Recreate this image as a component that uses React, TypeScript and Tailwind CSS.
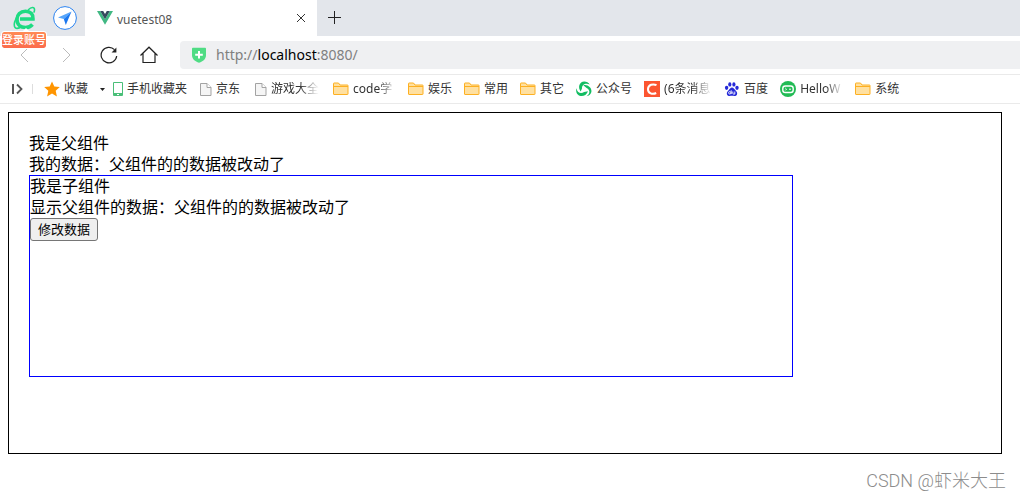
import { useState } from 'react';
import type { ReactNode } from 'react';
import { clsx } from 'clsx';

interface Bookmark {
  label: string;
  icon: ReactNode;
  className?: string;
  // Long titles fade out on the right
  faded?: string;
}

const FolderIcon = () => (
  <svg width="16" height="16" viewBox="0 0 16 16" fill="#ffe0a0" stroke="#fdb022" aria-hidden="true">
    <path d="M.5 13V2.500q0-.5.5-.5h4.500l1.500 2h7.500q.5 0 .5.500V13q0 .5-.5.500H1q-.5 0-.5-.5z" />
    <path d="M.5 5.500h14.500" />
  </svg>
);

const PageIcon = () => (
  <svg width="12" height="14" viewBox="0 0 12 14" fill="#f5f5f5" stroke="#a3a3a3" aria-hidden="true">
    <path d="M.5 1.500h6.500l4 4v8H.5z" />
    <path d="M7 1.500v4h4" fill="#fff" />
  </svg>
);

const PhoneIcon = () => (
  <svg width="10" height="16" viewBox="0 0 10 16" aria-hidden="true">
    <rect width="10" height="14" y="1" rx="1" fill="#4abf78" />
    <rect x="1" y="2" width="8" height="10" fill="#fff" />
    <rect x="4" y="13" width="2" height="1" fill="#fff" />
  </svg>
);

const StarIcon = () => (
  <svg width="16" height="16" viewBox="0 0 16 16" fill="#ff9500" aria-hidden="true">
    <path d="M8 .5l2.300 5 5.500.6-4.100 3.700 1.200 5.600L8 12.600l-4.900 2.800 1.200-5.600L.2 6.100l5.500-.6z" />
  </svg>
);

const SwirlIcon = () => (
  <svg width="16" height="16" viewBox="0 0 16 16" fill="#12bd62" aria-hidden="true">
    <path d="M4.700 10.500C1.500 6.500 3.300.8 8.300.6c2.300 0 4.300 1.200 5.500 3C10.200 1.500 5.700 3.200 6 7.500z" />
    <path d="M7.300 4.300c5-1.300 9 3.300 8 7-.7 2.300-2.500 3.700-4.800 3.900 3.600-2.100 4-6.400.1-8.300z" />
    <path d="M12 10.200c-1.700 5-7.300 6.300-10.200 3.300C.2 11.800-.3 9.400.6 7.200c.2 4.200 4 6.300 7.500 3.900z" />
  </svg>
);

const CsdnIcon = () => (
  <svg width="16" height="16" viewBox="0 0 16 16" aria-hidden="true">
    <rect width="16" height="16" fill="#fc5531" />
    <path d="M12.500 4.200C9.200 2.500 4.300 3.500 4 8c-.2 4.500 4.500 5.800 8.200 4" fill="none" stroke="#fff" strokeWidth="2" />
  </svg>
);

const PawIcon = () => (
  <svg width="16" height="16" viewBox="0 0 16 16" fill="#2529d8" aria-hidden="true">
    <ellipse cx="2.600" cy="6.800" rx="1.700" ry="2.100" />
    <ellipse cx="5.800" cy="3.400" rx="1.600" ry="2.200" />
    <ellipse cx="9.900" cy="3.400" rx="1.600" ry="2.200" />
    <ellipse cx="13" cy="6.800" rx="1.700" ry="2.100" />
    <path d="M8 6.500c1.500 0 2.300 1.600 3.400 2.700 1.300 1.200 2.200 2.500 1.600 4.200-.8 2.200-3.200 1.400-5 1.400s-4.200.8-5-1.400c-.6-1.700.3-3 1.600-4.200C5.700 8.100 6.500 6.500 8 6.500z" />
    <g fill="none" stroke="#fff" strokeWidth=".9">
      <circle cx="5.800" cy="11.800" r="1.200" />
      <path d="M7.200 9.300V13M8.800 10.500v1.800q0 .8.800.8h1.200v-2.600" />
    </g>
  </svg>
);

const RobotIcon = () => (
  <svg width="16" height="16" viewBox="0 0 16 16" aria-hidden="true">
    <circle cx="8" cy="8" r="8" fill="#22bb55" />
    <rect x="2.800" y="5" width="10.400" height="6.500" rx="2.500" fill="none" stroke="#fff" strokeWidth="1.400" />
    <path d="M5.300 7l1.200 1.200-1.200 1.200M9 8.200h2" fill="none" stroke="#fff" />
  </svg>
);

const BrowserLogo = () => (
  <svg width="24" height="24" viewBox="0 0 24 24" fill="none" stroke="#1edb82" aria-hidden="true">
    <path d="M7 13h13c.3-4.800-2.500-7.700-7.500-7.700-5.100 0-8.500 3.300-8.500 8.200 0 5 3.500 8 8.500 8 3 0 5.300-1 7-3" strokeWidth="3.600" />
    <path d="M15 4c3.500-3.200 6.300-3.300 6.500-.5.100 1-.2 2.200-.8 3.200M6 8C1.500 13 .2 19.500 2.200 21.700c1.300 1.200 4 .6 6.800-1.200" strokeWidth="1.600" />
  </svg>
);

const PlaneIcon = () => (
  <svg width="24" height="24" viewBox="0 0 24 24" aria-hidden="true">
    <circle cx="12" cy="12" r="11.400" fill="#fff" stroke="#2b83f0" />
    <path d="M18.500 5.500L5 11.500l5.800 1.600z" fill="#56a5fb" />
    <path d="M18.500 5.500l-7.700 7.600 2 5.900z" fill="#1b78f0" />
  </svg>
);

const VueIcon = () => (
  <svg width="16" height="14" viewBox="0 0 16 14" aria-hidden="true">
    <path d="M0 0h3.200L8 8.300 12.800 0H16L8 13.800z" fill="#41b883" />
    <path d="M3.200 0h3L8 3.100 9.800 0h3L8 8.300z" fill="#35495e" />
  </svg>
);

const ShieldIcon = () => (
  <svg width="14" height="16" viewBox="0 0 14 16" aria-hidden="true">
    <path d="M0 1.500q0-.8.800-.8h12.400q.8 0 .8.800V8c0 4-3 6.500-7 7.700C3 14.500 0 12 0 8z" fill="#4fdc84" />
    <path d="M7 4v7.500M3.200 7.700h7.600" stroke="#fff" strokeWidth="2" />
  </svg>
);

const bookmarks: Bookmark[] = [
  { label: '手机收藏夹', icon: <PhoneIcon /> },
  { label: '京东', icon: <PageIcon />, className: 'px-px' },
  { label: '游戏大全', icon: <PageIcon />, className: 'px-0.5', faded: 'w-12' },
  { label: 'code学', icon: <FolderIcon />, faded: 'w-[43px]' },
  { label: '娱乐', icon: <FolderIcon /> },
  { label: '常用', icon: <FolderIcon /> },
  { label: '其它', icon: <FolderIcon /> },
  { label: '公众号', icon: <SwirlIcon /> },
  { label: '(6条消息', icon: <CsdnIcon />, faded: 'w-12' },
  { label: '百度', icon: <PawIcon /> },
  { label: 'HelloW', icon: <RobotIcon />, faded: 'w-[43px]' },
  { label: '系统', icon: <FolderIcon /> },
];

function TabBar() {
  return (
    <header className="flex h-9 bg-[#e3e6eb]">
      <div className="relative flex w-[85px] shrink-0 items-center gap-4 pl-[13px]">
        <button aria-label="登录账号"><BrowserLogo /></button>
        <button aria-label="导航"><PlaneIcon /></button>
        <div className="absolute left-0.5 top-8 z-10 whitespace-nowrap rounded-xs bg-linear-to-b from-[#ff8a55] to-[#fb6b4c] text-[11px] font-medium leading-4 text-white outline outline-white">
          登录账号
          <span className="absolute -top-1 left-5 border-x-4 border-b-4 border-x-transparent border-b-white" />
        </div>
      </div>
      <div className="flex w-58 items-center gap-1 bg-white pl-3 pr-2.5 text-xs text-[#555]">
        <VueIcon />
        <span className="flex-1 pt-1">vuetest08</span>
        <button aria-label="关闭标签页">
          <svg width="12" height="12" viewBox="0 0 12 12" stroke="#333" aria-hidden="true">
            <path d="M2 2l8 8M10 2l-8 8" />
          </svg>
        </button>
      </div>
      <button aria-label="新建标签页" className="ml-2.5">
        <svg width="14" height="14" viewBox="0 0 14 14" stroke="#222" aria-hidden="true">
          <path d="M7.500 0v13M1 6.500h13" />
        </svg>
      </button>
    </header>
  );
}

function Toolbar() {
  return (
    <div className="flex h-[38px] items-center pl-4">
      <div className="flex w-41 shrink-0 items-center">
        <button aria-label="后退" className="w-[43px]">
          <svg width="16" height="16" viewBox="0 0 16 16" fill="none" stroke="#bbb" aria-hidden="true">
            <path d="M12 1L5 8l7 7" />
          </svg>
        </button>
        <button aria-label="前进" className="w-[41px]">
          <svg width="16" height="16" viewBox="0 0 16 16" fill="none" stroke="#bbb" aria-hidden="true">
            <path d="M4 1l7 7-7 7" />
          </svg>
        </button>
        <button aria-label="刷新" className="w-10">
          <svg width="18" height="18" viewBox="0 0 18 18" fill="none" stroke="#222" strokeWidth="1.200" aria-hidden="true">
            <path d="M16.700 10A7.800 7.800 0 1 1 14.500 3.600" />
            <path d="M16.400 1.600v4.800h-4.800z" fill="#222" stroke="none" />
          </svg>
        </button>
        <button aria-label="主页" className="w-10">
          <svg width="18" height="18" viewBox="0 0 18 18" fill="none" stroke="#222" strokeWidth="1.200" aria-hidden="true">
            <path d="M.5 9.500L9 1.200l8.500 8.300M3 7.500v9h12v-9" />
          </svg>
        </button>
      </div>
      <div className="flex h-7 flex-1 items-center gap-2.5 rounded-l-sm bg-[#eff0f2] pl-3">
        <ShieldIcon />
        <a href="http://localhost:8080/" className="text-sm text-[#808080]">
          http://<span className="text-black">localhost</span>:8080/
        </a>
      </div>
    </div>
  );
}

function BookmarkBar() {
  return (
    <nav className="flex h-[30px] items-center border-y border-[#eaeaea] pl-3 text-xs text-[#333]">
      <button aria-label="展开侧栏" className="mr-2">
        <svg width="12" height="12" viewBox="0 0 12 12" fill="none" stroke="#555" aria-hidden="true">
          <path d="M1 1v10" strokeWidth="2" />
          <path d="M5 1.500L9.500 6 5 10.500" strokeWidth="1.800" />
        </svg>
      </button>
      <span className="mr-[11px] h-2.5 w-px bg-[#ddd]" />
      <button className="mr-2 flex items-center gap-1 whitespace-nowrap">
        <StarIcon />
        收藏
        <svg width="5" height="3" viewBox="0 0 5 3" fill="#222" className="ml-2" aria-hidden="true">
          <path d="M0 0h5L2.500 3z" />
        </svg>
      </button>
      <ul className="flex items-center gap-3">
        {bookmarks.map(({ label, icon, className, faded }) => (
          <li key={label}>
            <a href="#" className={clsx('flex items-center gap-1 whitespace-nowrap', className)}>
              {icon}
              <span className={clsx(faded, faded && 'mask-r-from-60%')}>{label}</span>
            </a>
          </li>
        ))}
      </ul>
    </nav>
  );
}

function Child({ message, onChange }: { message: string; onChange: () => void }) {
  return (
    <section className="box-content h-50 w-4/5 border border-[#0000ff]">
      <p>我是子组件</p>
      <p>显示父组件的数据：{message}</p>
      <button
        onClick={onChange}
        className="block rounded-[3px] border border-[#767676] bg-[#efefef] px-[7px] text-[13px] leading-[21px]"
      >
        修改数据
      </button>
    </section>
  );
}

function Parent() {
  const [message, setMessage] = useState('父组件的的数据被改动了');

  return (
    <main className="ml-2 mr-[18px] mt-2 box-content h-75 border border-black p-5 text-base leading-[21px] text-black">
      <p>我是父组件</p>
      <p>我的数据：{message}</p>
      <Child message={message} onChange={() => setMessage('父组件的的数据被改动了')} />
    </main>
  );
}

export default function App() {
  return (
    <div className="min-h-screen bg-white font-['Noto_Sans','Noto_Sans_CJK_SC',sans-serif]">
      <TabBar />
      <Toolbar />
      <BookmarkBar />
      <Parent />
      <footer className="mr-3.5 mt-[13px] text-right font-['Roboto','Noto_Sans_CJK_SC',sans-serif] text-lg font-light text-[#8c8c8c]">
        CSDN @虾米大王
      </footer>
    </div>
  );
}
